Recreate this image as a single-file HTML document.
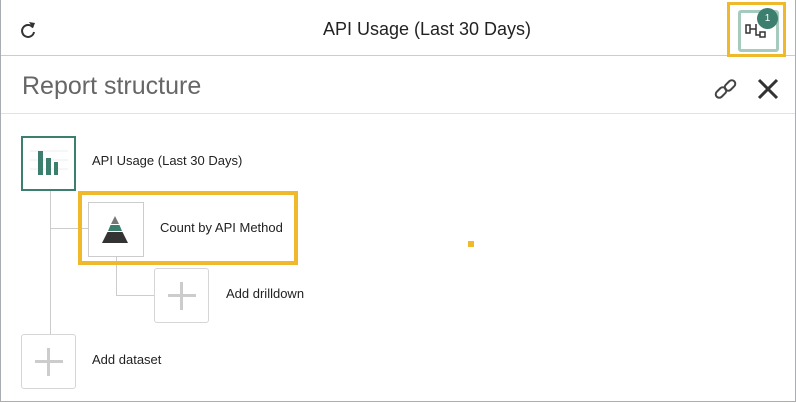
<!DOCTYPE html>
<html><head><style>
body{margin:0;width:796px;height:403px;overflow:hidden;background:#fff;font-family:"Liberation Sans",sans-serif;position:relative}
.a{position:absolute}
.t{position:absolute;font-size:13px;color:#222}
.plus{position:absolute;border:1px solid #d6d6d6;border-radius:3px;width:53px;height:53px;background:#fff}
.plus:before{content:"";position:absolute;left:13px;top:25px;width:28px;height:3px;background:#ccc}
.plus:after{content:"";position:absolute;left:25px;top:13px;width:3px;height:28px;background:#ccc}
</style></head><body>
<div class="a" style="left:0;top:0;width:794px;height:401px;border:1px solid #a9aeb4;border-top:none"></div>
<svg class="a" style="left:18px;top:20px" width="20" height="20" viewBox="0 0 20 20"><path d="M15 7.5A6 6 0 1 0 16 12" fill="none" stroke="#333" stroke-width="2"/><path d="M11 2l6 1-2 5z" fill="#333"/></svg>
<div class="a" style="left:0;width:796px;top:19px;text-align:center;font-size:18px;color:#222;padding-left:58px;box-sizing:border-box">API Usage (Last 30 Days)</div>
<div class="a" style="left:1px;top:55px;width:794px;height:1px;background:#ccc"></div>
<div class="a" style="left:727px;top:2px;width:53px;height:49px;border:3px solid #f0b92b"></div>
<div class="a" style="left:738px;top:10px;width:35px;height:36px;border:3px solid #a6cbbd;border-radius:3px"></div>
<svg class="a" style="left:744px;top:22px" width="26" height="18"><rect x="2" y="3" width="4" height="8" fill="none" stroke="#333" stroke-width="1.5"/><path d="M6 7h6M12 2v11h4" fill="none" stroke="#333" stroke-width="1.5"/><rect x="16" y="10" width="5" height="5" fill="none" stroke="#333" stroke-width="1.5"/></svg>
<div class="a" style="left:757px;top:8px;width:21px;height:21px;border-radius:50%;background:#3d7f6e;color:#fff;font-size:10px;text-align:center;line-height:21px">1</div>
<div class="a" style="left:22px;top:72px;font-size:25px;color:#666">Report structure</div>
<svg class="a" style="left:713px;top:77px" width="26" height="26" viewBox="0 0 26 26"><g fill="none" stroke="#444" stroke-width="2"><rect x="2" y="12" width="12" height="7" rx="3.5" transform="rotate(-45 8 15.5)"/><rect x="11" y="5" width="12" height="7" rx="3.5" transform="rotate(-45 17 8.5)"/></g></svg>
<svg class="a" style="left:757px;top:78px" width="22" height="22"><path d="M2 2L20 20M20 2L2 20" stroke="#333" stroke-width="3"/></svg>
<div class="a" style="left:1px;top:113px;width:794px;height:1px;background:#e3e3e3"></div>
<div class="a" style="left:50px;top:190px;width:1px;height:144px;background:#ccc"></div>
<div class="a" style="left:50px;top:228px;width:38px;height:1px;background:#ccc"></div>
<div class="a" style="left:116px;top:256px;width:1px;height:39px;background:#ccc"></div>
<div class="a" style="left:116px;top:295px;width:38px;height:1px;background:#ccc"></div>
<div class="a" style="left:21px;top:136px;width:51px;height:51px;border:2px solid #3d7f6e;background:#fff"></div>
<svg class="a" style="left:30px;top:148px" width="38" height="30"><g stroke="#eee"><path d="M0 3h38M0 12h38M0 21h38"/></g><rect x="8" y="3" width="5" height="24" fill="#3d7f6e"/><rect x="16" y="10" width="5" height="17" fill="#3d7f6e"/><rect x="24" y="14" width="4" height="13" fill="#3d7f6e"/></svg>
<div class="t" style="left:92px;top:153px">API Usage (Last 30 Days)</div>
<div class="a" style="left:78px;top:191px;width:212px;height:66px;border:4px solid #f0b92b"></div>
<div class="a" style="left:88px;top:202px;width:54px;height:53px;border:1px solid #ccc;background:#fff"></div>
<svg class="a" style="left:100px;top:215px" width="30" height="30"><path d="M15 1L11 9H19Z" fill="#777"/><path d="M10.5 10h9l2.5 6H8z" fill="#3d7f6e"/><path d="M7.5 17h15l5.5 11H2z" fill="#333"/></svg>
<div class="t" style="left:160px;top:220px">Count by API Method</div>
<div class="plus" style="left:154px;top:268px"></div>
<div class="t" style="left:226px;top:286px">Add drilldown</div>
<div class="plus" style="left:21px;top:334px"></div>
<div class="t" style="left:92px;top:352px">Add dataset</div>
<div class="a" style="left:468px;top:241px;width:6px;height:6px;background:#f0b92b"></div>
</body></html>
